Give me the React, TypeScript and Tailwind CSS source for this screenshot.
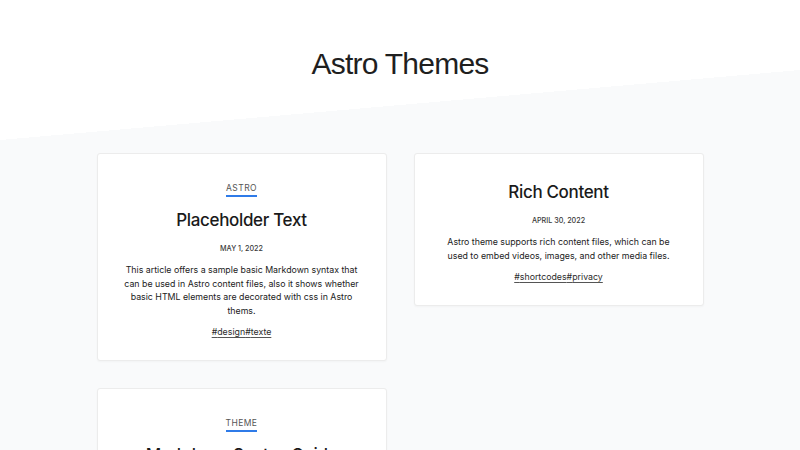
import React from "react";

type Post = {
  category?: string;
  title: string;
  date: string;
  body: string;
  tags: string[];
};

const posts: Post[] = [
  {
    category: "Astro",
    title: "Placeholder Text",
    date: "May 1, 2022",
    body: "This article offers a sample basic Markdown syntax that can be used in Astro content files, also it shows whether basic HTML elements are decorated with css in Astro thems.",
    tags: ["design", "texte"],
  },
  {
    title: "Rich Content",
    date: "April 30, 2022",
    body: "Astro theme supports rich content files, which can be used to embed videos, images, and other media files.",
    tags: ["shortcodes", "privacy"],
  },
  {
    category: "Theme",
    title: "Markdown Syntax Guide",
    date: "April 20, 2022",
    body: "This article offers a sample of basic Markdown syntax that can be used in Astro content files, also it shows whether basic HTML elements are decorated with CSS.",
    tags: ["markdown", "css", "html"],
  },
];

function Card({ post }: { post: Post }) {
  return (
    <article className="bg-white border border-[#ececec] rounded-[3px] shadow-[0_1px_2px_rgba(0,0,0,0.03)] pt-[24px] pb-[21px] px-[25px] flex flex-col items-center text-center font-['Inter',sans-serif]">
      {post.category && (
        <a className="mt-[3px] mb-[9px] inline-block text-[8.5px] leading-[14px] tracking-[0.05em] uppercase text-[#555] border-b-2 border-[#2f7be8]">
          {post.category}
        </a>
      )}
      <h2 className="text-[17px] leading-[28px] font-medium tracking-[-0.02em] text-[#1a1a1a]">
        {post.title}
      </h2>
      <div className="mt-[9px] text-[7.2px] leading-[12px] font-medium uppercase text-[#3a3a3a]">
        {post.date}
      </div>
      <p className="mt-[8px] text-[8.8px] leading-[13.5px] text-[#222]">
        {post.body}
      </p>
      <div className="mt-[8px] text-[8.8px] leading-[14px] text-[#2b2b2b]">
        {post.tags.map((t) => (
          <a key={t} className="underline underline-offset-[1.5px] decoration-[#555]">
            #{t}
          </a>
        ))}
      </div>
    </article>
  );
}

export default function App() {
  return (
    <div className="min-h-[450px] bg-[#f9fafb]">
      <header className="h-[140px] bg-white bg-[linear-gradient(to_bottom_right,#ffffff_50%,#f9fafb_50%)] bg-no-repeat bg-bottom bg-[length:100%_70px] pt-[46px]">
        <h1 className="text-center text-[30px] leading-[36px] tracking-[-0.025em] text-[#1f1f1f] font-['Liberation_Sans',Arial,sans-serif]">
          Astro Themes
        </h1>
      </header>
      <main className="pt-[13px] pb-10">
        <div className="w-[607px] mx-auto grid grid-cols-2 gap-x-[27px] gap-y-[27px] items-start">
          {posts.map((p) => (
            <Card key={p.title} post={p} />
          ))}
        </div>
      </main>
    </div>
  );
}
